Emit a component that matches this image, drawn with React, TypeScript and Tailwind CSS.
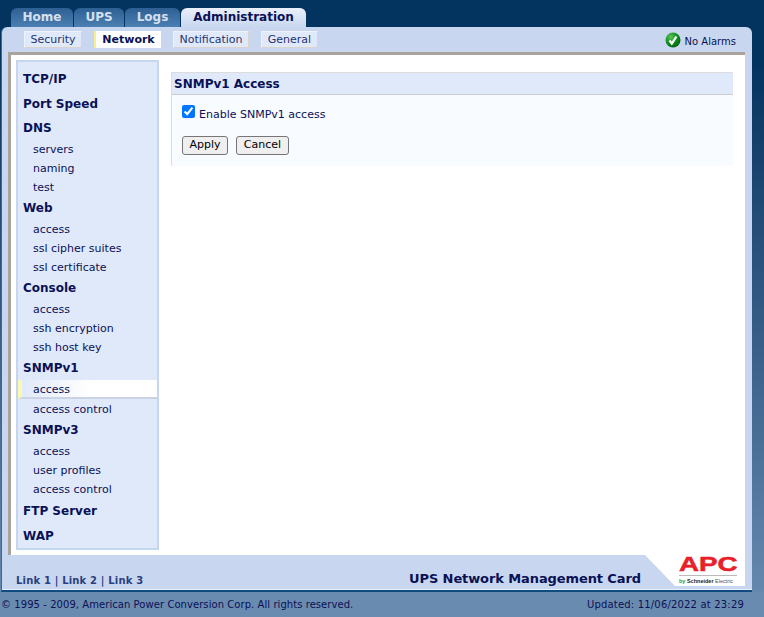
const mainTabs = [
  { label: "Home", width: "w-[62px]" },
  { label: "UPS", width: "w-[50px]" },
  { label: "Logs", width: "w-[55px]" },
];

const subTabs = [
  { label: "Security", width: "w-[58px]", active: false },
  { label: "Network", width: "w-[67px]", active: true },
  { label: "Notification", width: "w-[76px]", active: false },
  { label: "General", width: "w-[57px]", active: false },
];

type MenuRow = { label: string; kind: "head" | "top" | "item" | "active" };

const menu: MenuRow[] = [
  { label: "TCP/IP", kind: "top" },
  { label: "Port Speed", kind: "top" },
  { label: "DNS", kind: "head" },
  { label: "servers", kind: "item" },
  { label: "naming", kind: "item" },
  { label: "test", kind: "item" },
  { label: "Web", kind: "head" },
  { label: "access", kind: "item" },
  { label: "ssl cipher suites", kind: "item" },
  { label: "ssl certificate", kind: "item" },
  { label: "Console", kind: "head" },
  { label: "access", kind: "item" },
  { label: "ssh encryption", kind: "item" },
  { label: "ssh host key", kind: "item" },
  { label: "SNMPv1", kind: "head" },
  { label: "access", kind: "active" },
  { label: "access control", kind: "item" },
  { label: "SNMPv3", kind: "head" },
  { label: "access", kind: "item" },
  { label: "user profiles", kind: "item" },
  { label: "access control", kind: "item" },
  { label: "FTP Server", kind: "top" },
  { label: "WAP", kind: "top" },
];

function Row({ row }: { row: MenuRow }) {
  if (row.kind === "top") {
    return (
      <div className="flex h-[25px] items-center pl-[5px] text-[12px] font-bold text-[#0a1155]">
        {row.label}
      </div>
    );
  }
  if (row.kind === "head") {
    return (
      <div className="flex h-[23px] items-center pl-[5px] text-[12px] font-bold text-[#0a1155]">
        {row.label}
      </div>
    );
  }
  if (row.kind === "active") {
    return (
      <div className="mt-px flex h-[19px] items-center border-b-2 border-l-[4px] border-b-[#c9d3e2] border-l-[#fbf8b4] bg-gradient-to-r from-[#e0e9fa] to-white to-50% pt-[4px] pl-[11px] text-[11px] text-[#0a1155]">
        {row.label}
      </div>
    );
  }
  return (
    <div className="flex h-[19px] items-center pt-[4px] pl-[15px] text-[11px] text-[#0a1155]">
      {row.label}
    </div>
  );
}

export default function App() {
  return (
    <div className="flex h-[617px] w-[764px] flex-col overflow-hidden bg-[#6a8bb0] font-['DejaVu_Sans','Verdana',sans-serif]">
      <div className="flex h-[592px] flex-col bg-gradient-to-b from-[#03335f] from-10% to-[#6588ae]">
        <div className="flex h-[27px] items-end gap-px pl-[11px]">
          {mainTabs.map((t) => (
            <div
              key={t.label}
              className={`flex h-[19px] ${t.width} items-center justify-center rounded-t-[6px] bg-gradient-to-b from-[#2d5f93] to-[#4c80b3] pb-[2px] text-[12px] font-bold text-[#d5e0ee]`}
            >
              {t.label}
            </div>
          ))}
          <div className="flex h-[19px] w-[125px] items-center justify-center rounded-t-[6px] bg-gradient-to-b from-[#eaf0fa] to-[#c8d7ef] pb-[2px] text-[12px] font-bold text-[#0a1155]">
            Administration
          </div>
        </div>

        <div className="ml-px flex h-[565px] w-[751px] flex-col rounded-t-[6px] border-b-2 border-l border-b-[#0f4a80] border-l-[#2d6ca8] bg-[#c8d7ef]">
          <div className="flex h-[25px] items-center pl-[22px] pr-[16px]">
            <div className="flex gap-[12px]">
              {subTabs.map((t) =>
                t.active ? (
                  <div
                    key={t.label}
                    className={`flex h-[17px] ${t.width} items-center justify-center border-l-2 border-l-[#f5f08a] bg-white pt-[2px] text-[11px] font-bold text-[#0a1155]`}
                  >
                    {t.label}
                  </div>
                ) : (
                  <div
                    key={t.label}
                    className={`flex h-[17px] ${t.width} items-center justify-center border border-t-[#eef3fb] border-r-[#d8d4cc] border-b-[#d8d4cc] border-l-[#eef3fb] bg-[#e0e9fa] pt-[1px] text-[11px] text-[#25346f]`}
                  >
                    {t.label}
                  </div>
                ),
              )}
            </div>
            <div className="ml-auto flex items-center gap-[4px] text-[10px] text-[#0a1155]">
              <svg width="16" height="16" viewBox="0 0 16 16">
                <defs>
                  <radialGradient id="ok" cx="35%" cy="30%" r="75%">
                    <stop offset="0%" stopColor="#5cc45c" />
                    <stop offset="60%" stopColor="#0d8a1c" />
                    <stop offset="100%" stopColor="#05600f" />
                  </radialGradient>
                </defs>
                <circle cx="8" cy="8" r="7.5" fill="url(#ok)" />
                <path d="M4.5 8.5 L6.8 11.5 L11.5 4.5" fill="none" stroke="white" strokeWidth="2.2" />
              </svg>
              <span className="pt-[4px]">No Alarms</span>
            </div>
          </div>

          <div className="ml-[6px] flex h-[503px] w-[737px] border-t-[3px] border-l-[3px] border-[#a8a49c] bg-white pt-[5px] pl-[5px]">
            <div className="h-[490px] w-[143px] border-2 border-[#c5d6ee] bg-[#e0e9fa] py-[4px]">
              {menu.map((row, i) => (
                <Row key={i} row={row} />
              ))}
            </div>
            <div className="ml-[12px] mt-[12px] h-[94px] w-[562px] border-t border-l border-[#dcdcdc] bg-[#f8fbff]">
              <div className="flex h-[22px] items-center border-b border-[#cccccc] bg-[#e0e9fa] pl-[2px] text-[12px] font-bold text-[#0a1155]">
                SNMPv1 Access
              </div>
              <label className="mt-[10px] ml-[10px] flex h-[14px] items-start gap-[4px] text-[11px] text-[#0a1155]">
                <input type="checkbox" defaultChecked className="m-0 h-[13px] w-[13px]" />
                <span className="mt-[3px] leading-[14px]">Enable SNMPv1 access</span>
              </label>
              <div className="mt-[17px] ml-[10px] flex gap-[8px]">
                <button className="h-[19px] w-[46px] rounded-[3px] border border-[#767676] bg-[#efefef] text-[11px] text-black">
                  Apply
                </button>
                <button className="h-[19px] w-[53px] rounded-[3px] border border-[#767676] bg-[#efefef] text-[11px] text-black">
                  Cancel
                </button>
              </div>
            </div>
          </div>

          <div className="ml-[6px] flex h-[34px] w-[737px] items-start">
            <div className="mt-[18px] pl-[8px] text-[10px] font-bold tracking-[0.17px] text-[#2a3f80]">
              Link 1 | Link 2 | Link 3
            </div>
            <div className="ml-auto mt-[14px] mr-[2px] text-[13px] font-bold tracking-[-0.1px] text-[#0a1155]">
              UPS Network Management Card
            </div>
            <svg width="32" height="31" viewBox="0 0 32 31" className="shrink-0">
              <polygon points="0,0 2,0 32,31 0,31" fill="#c8d7ef" />
              <polygon points="2,0 32,0 32,31" fill="white" />
            </svg>
            <div className="flex h-[31px] w-[70px] flex-col bg-white pl-[4px]">
              <div className="ml-[7px] mt-[-3px] w-fit origin-center scale-x-[1.32] font-['Liberation_Sans',sans-serif] text-[21px] font-bold leading-[24px] text-[#e8202a] [-webkit-text-stroke:0.5px_#e8202a]">
                APC
              </div>
              <div className="mt-[-1px] w-[58px] whitespace-nowrap border-t border-[#bbbbbb] pt-[2px] font-['Liberation_Sans',sans-serif] text-[5.5px] font-bold leading-[7px] text-[#222222]">
                <span className="text-[#2a9a3a]">by </span>Schneider <span className="font-normal text-[#555555]">Electric</span>
              </div>
            </div>
          </div>
          <div className="h-px bg-[#e8f0fa]" />
        </div>
      </div>
      <div className="flex h-[25px] items-center justify-between pl-[1px] pr-[20px] text-[10px] text-[#0a1155]">
        <span className="tracking-[0.06px]">© 1995 - 2009, American Power Conversion Corp. All rights reserved.</span>
        <span className="tracking-[0.18px]">Updated: 11/06/2022 at 23:29</span>
      </div>
    </div>
  );
}
